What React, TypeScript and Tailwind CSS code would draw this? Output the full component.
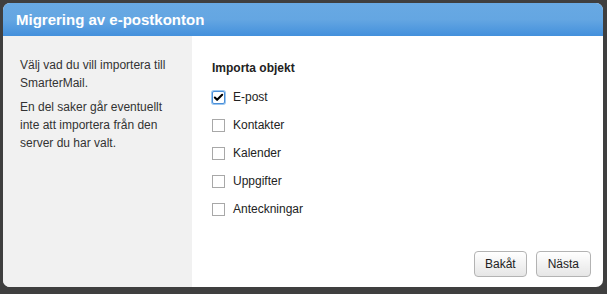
import { Check } from "lucide-react";

const items = [
  { label: "E-post", checked: true },
  { label: "Kontakter", checked: false },
  { label: "Kalender", checked: false },
  { label: "Uppgifter", checked: false },
  { label: "Anteckningar", checked: false },
];

export default function App() {
  return (
    <div className="w-[607px] h-[294px] bg-[#3f3f3f] pt-[3px] pl-[3px] font-['Liberation_Sans',Arial,sans-serif]">
      <div className="w-[600px] h-[284px] rounded-[7px] overflow-hidden flex flex-col bg-white">
        <div className="h-[33px] shrink-0 bg-gradient-to-b from-[#68a9e3] via-[#64a6e2] to-[#4390dc] flex items-center pl-[13px]">
          <h1 className="text-white font-bold text-[15px] leading-none">Migrering av e-postkonton</h1>
        </div>
        <div className="flex flex-1">
          <div className="w-[189px] shrink-0 bg-[#f1f1f1] pl-[17px] pr-3 pt-[20px] text-[12px] leading-[18px] text-[#333]">
            <p>Välj vad du vill importera till SmarterMail.</p>
            <p className="mt-[6px]">En del saker går eventuellt inte att importera från den server du har valt.</p>
          </div>
          <div className="flex-1 flex flex-col pl-[20px] pr-[12px] pt-[24px] pb-[10px]">
            <h2 className="text-[12px] font-bold text-[#222] leading-[16px]">Importa objekt</h2>
            <div className="mt-[14px] flex flex-col gap-[14px]">
              {items.map((item) => (
                <label key={item.label} className="flex items-center gap-[8px] text-[12px] text-[#222] leading-[14px]">
                  {item.checked ? (
                    <span className="w-[13px] h-[13px] border border-[#4a8fd9] rounded-[2px] bg-white flex items-center justify-center shadow-[0_0_0_1px_#9cc7f0]">
                      <Check className="w-[11px] h-[11px] text-black" strokeWidth={4.5} />
                    </span>
                  ) : (
                    <span className="w-[13px] h-[13px] border border-[#a8a8a8] bg-white" />
                  )}
                  {item.label}
                </label>
              ))}
            </div>
            <div className="mt-auto flex justify-end gap-[9px]">
              <button className="h-[26px] px-[10px] text-[12px] text-[#222] border border-[#b3b3b3] rounded-[4px] bg-gradient-to-b from-white to-[#e6e6e6]">Bakåt</button>
              <button className="h-[26px] px-[11px] text-[12px] text-[#222] border border-[#b3b3b3] rounded-[4px] bg-gradient-to-b from-white to-[#e6e6e6]">Nästa</button>
            </div>
          </div>
        </div>
      </div>
    </div>
  );
}
